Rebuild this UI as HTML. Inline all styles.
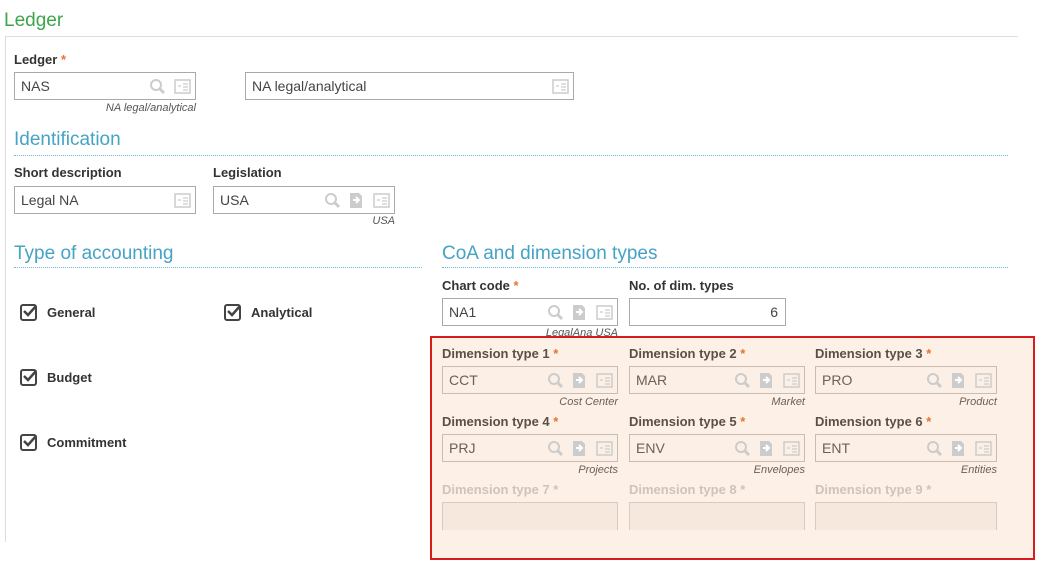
<!DOCTYPE html>
<html><head><style>
body{margin:0;width:1037px;height:562px;background:#fff;position:relative;overflow:hidden;font-family:"Liberation Sans",sans-serif;color:#333}
.a{position:absolute}
.t1{font-size:19px;color:#3da54a}
.t2{font-size:19px;color:#45a3c6}
.lbl{font-size:13px;font-weight:bold;color:#333}
.star{color:#e8742c}
.inp{position:absolute;border:1px solid #aaa;background:#fff;height:28px;box-sizing:border-box;font-size:14px;line-height:27px;padding-left:6px;color:#444}
.cap{position:absolute;font-size:11px;font-style:italic;color:#555;text-align:right}
.line{position:absolute;height:0;border-top:1px dotted #6bbcd8}
.ic{position:absolute;top:5px}
.cb{position:absolute;width:13px;height:13px;border:2px solid #444;border-radius:3px}
.cbl{position:absolute;font-size:13px;font-weight:bold;color:#333}
</style></head><body>
<svg width="0" height="0" style="position:absolute"><defs>
<g id="s"><circle cx="7" cy="7" r="5" fill="none" stroke="#ccc" stroke-width="2"/><path d="M11 11l4 4" stroke="#ccc" stroke-width="3"/></g>
<g id="g"><path d="M2 1h9l3 3v12H2z" fill="#ccc"/><path d="M5 8h5M8 5l3 3-3 3" stroke="#fff" stroke-width="2" fill="none"/></g>
<g id="c"><rect x="1" y="2" width="15" height="13" fill="none" stroke="#ccc" stroke-width="1.5"/><path d="M4 8h3M9 6h5M9 9h5M9 12h5" stroke="#ccc" stroke-width="1.2"/></g>
</defs></svg>

<div class="a t1" style="left:4px;top:10px">Ledger</div>
<div class="a" style="left:5px;top:36px;width:1012px;height:505px;border-top:1px solid #ddd;border-left:1px solid #ddd"></div>

<div class="a lbl" style="left:14px;top:52px">Ledger <span class="star">*</span></div>
<div class="inp" style="left:14px;top:72px;width:182px">NAS
<svg class="ic" style="left:134px" width="18" height="18"><use href="#s"/></svg><svg class="ic" style="left:159px" width="18" height="18"><use href="#c"/></svg></div>
<div class="cap" style="left:60px;width:136px;top:102px">NA legal/analytical</div>
<div class="inp" style="left:245px;top:72px;width:329px">NA legal/analytical
<svg class="ic" style="left:306px" width="18" height="18"><use href="#c"/></svg></div>

<div class="a t2" style="left:14px;top:129px">Identification</div>
<div class="line" style="left:14px;top:155px;width:994px"></div>
<div class="a lbl" style="left:14px;top:165px">Short description</div>
<div class="inp" style="left:14px;top:186px;width:182px">Legal NA
<svg class="ic" style="left:159px" width="18" height="18"><use href="#c"/></svg></div>
<div class="a lbl" style="left:213px;top:165px">Legislation</div>
<div class="inp" style="left:213px;top:186px;width:182px">USA
<svg class="ic" style="left:110px" width="18" height="18"><use href="#s"/></svg><svg class="ic" style="left:134px" width="18" height="18"><use href="#g"/></svg><svg class="ic" style="left:159px" width="18" height="18"><use href="#c"/></svg></div>
<div class="cap" style="left:300px;width:95px;top:215px">USA</div>

<div class="a t2" style="left:14px;top:243px">Type of accounting</div>
<div class="line" style="left:14px;top:267px;width:408px"></div>
<div class="a t2" style="left:442px;top:243px">CoA and dimension types</div>
<div class="line" style="left:442px;top:267px;width:566px"></div>

<div class="cb" style="left:20px;top:304px"></div><div class="cbl" style="left:47px;top:305px">General</div>
<div class="cb" style="left:224px;top:304px"></div><div class="cbl" style="left:251px;top:305px">Analytical</div>
<div class="cb" style="left:20px;top:369px"></div><div class="cbl" style="left:47px;top:370px">Budget</div>
<div class="cb" style="left:20px;top:434px"></div><div class="cbl" style="left:47px;top:435px">Commitment</div>
<svg class="a" style="left:0;top:0" width="300" height="460">
<path d="M24 311l4 4 8-9M228 311l4 4 8-9M24 376l4 4 8-9M24 441l4 4 8-9" stroke="#444" stroke-width="2.5" fill="none"/>
</svg>

<div class="a lbl" style="left:442px;top:278px">Chart code <span class="star">*</span></div>
<div class="inp" style="left:442px;top:298px;width:176px">NA1
<svg class="ic" style="left:104px" width="18" height="18"><use href="#s"/></svg><svg class="ic" style="left:128px" width="18" height="18"><use href="#g"/></svg><svg class="ic" style="left:153px" width="18" height="18"><use href="#c"/></svg></div>
<div class="cap" style="left:500px;width:118px;top:327px">LegalAna USA</div>
<div class="a lbl" style="left:629px;top:278px">No. of dim. types</div>
<div class="inp" style="left:629px;top:298px;width:157px;text-align:right;padding-right:7px">6</div>

<div class="a" style="left:430px;top:336px;width:601px;height:220px;border:2px solid #d81c1c;background:#fdf0e6"></div>

<div class="a lbl" style="left:442px;top:346px;color:#5a5048">Dimension type 1 <span class="star">*</span></div>
<div class="a lbl" style="left:629px;top:346px;color:#5a5048">Dimension type 2 <span class="star">*</span></div>
<div class="a lbl" style="left:815px;top:346px;color:#5a5048">Dimension type 3 <span class="star">*</span></div>
<div class="a lbl" style="left:442px;top:414px;color:#5a5048">Dimension type 4 <span class="star">*</span></div>
<div class="a lbl" style="left:629px;top:414px;color:#5a5048">Dimension type 5 <span class="star">*</span></div>
<div class="a lbl" style="left:815px;top:414px;color:#5a5048">Dimension type 6 <span class="star">*</span></div>
<div class="a lbl" style="left:442px;top:482px;color:#cfc4ba">Dimension type 7 <span>*</span></div>
<div class="a lbl" style="left:629px;top:482px;color:#cfc4ba">Dimension type 8 <span>*</span></div>
<div class="a lbl" style="left:815px;top:482px;color:#cfc4ba">Dimension type 9 <span>*</span></div>

<div class="inp" style="left:442px;top:366px;width:176px;background:#fcf0e6;border-color:#c9bdb3;color:#6a6058">CCT<svg class="ic" style="left:104px" width="18" height="18"><use href="#s"/></svg><svg class="ic" style="left:128px" width="18" height="18"><use href="#g"/></svg><svg class="ic" style="left:153px" width="18" height="18"><use href="#c"/></svg></div>
<div class="inp" style="left:629px;top:366px;width:176px;background:#fcf0e6;border-color:#c9bdb3;color:#6a6058">MAR<svg class="ic" style="left:104px" width="18" height="18"><use href="#s"/></svg><svg class="ic" style="left:128px" width="18" height="18"><use href="#g"/></svg><svg class="ic" style="left:153px" width="18" height="18"><use href="#c"/></svg></div>
<div class="inp" style="left:815px;top:366px;width:182px;background:#fcf0e6;border-color:#c9bdb3;color:#6a6058">PRO<svg class="ic" style="left:110px" width="18" height="18"><use href="#s"/></svg><svg class="ic" style="left:134px" width="18" height="18"><use href="#g"/></svg><svg class="ic" style="left:159px" width="18" height="18"><use href="#c"/></svg></div>
<div class="inp" style="left:442px;top:434px;width:176px;background:#fcf0e6;border-color:#c9bdb3;color:#6a6058">PRJ<svg class="ic" style="left:104px" width="18" height="18"><use href="#s"/></svg><svg class="ic" style="left:128px" width="18" height="18"><use href="#g"/></svg><svg class="ic" style="left:153px" width="18" height="18"><use href="#c"/></svg></div>
<div class="inp" style="left:629px;top:434px;width:176px;background:#fcf0e6;border-color:#c9bdb3;color:#6a6058">ENV<svg class="ic" style="left:104px" width="18" height="18"><use href="#s"/></svg><svg class="ic" style="left:128px" width="18" height="18"><use href="#g"/></svg><svg class="ic" style="left:153px" width="18" height="18"><use href="#c"/></svg></div>
<div class="inp" style="left:815px;top:434px;width:182px;background:#fcf0e6;border-color:#c9bdb3;color:#6a6058">ENT<svg class="ic" style="left:110px" width="18" height="18"><use href="#s"/></svg><svg class="ic" style="left:134px" width="18" height="18"><use href="#g"/></svg><svg class="ic" style="left:159px" width="18" height="18"><use href="#c"/></svg></div>
<div class="inp" style="left:442px;top:502px;width:176px;height:28px;background:#f6e8dd;border-color:#d8ccc2;border-bottom:none"></div>
<div class="inp" style="left:629px;top:502px;width:176px;height:28px;background:#f6e8dd;border-color:#d8ccc2;border-bottom:none"></div>
<div class="inp" style="left:815px;top:502px;width:182px;height:28px;background:#f6e8dd;border-color:#d8ccc2;border-bottom:none"></div>
<div class="cap" style="left:500px;width:118px;top:396px;color:#6a6058">Cost Center</div>
<div class="cap" style="left:700px;width:105px;top:396px;color:#6a6058">Market</div>
<div class="cap" style="left:890px;width:107px;top:396px;color:#6a6058">Product</div>
<div class="cap" style="left:500px;width:118px;top:464px;color:#6a6058">Projects</div>
<div class="cap" style="left:700px;width:105px;top:464px;color:#6a6058">Envelopes</div>
<div class="cap" style="left:890px;width:107px;top:464px;color:#6a6058">Entities</div>
</body></html>
